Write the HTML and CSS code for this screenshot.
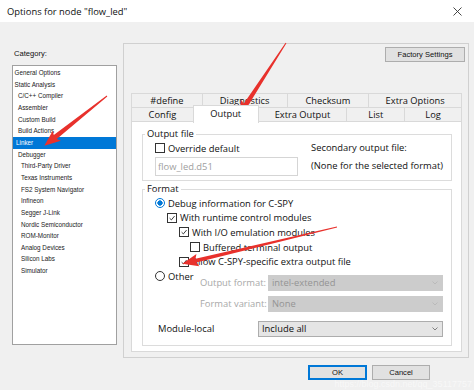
FILE: index.html
```html
<!DOCTYPE html>
<html lang="en">
<head>
    <meta charset="UTF-8">
    <meta name="viewport" content="width=device-width, initial-scale=1.0">
    <title>Options for node "flow_led"</title>
    <link rel="stylesheet" href="styles.css">
</head>
<body>
    <div class="titlebar">
        <span class="title">Options for node "flow_led"</span>
        <svg class="close" width="9" height="9" viewBox="0 0 9 9"><path d="M0.5 0.5L8.5 8.5M8.5 0.5L0.5 8.5" stroke="#333" stroke-width="0.9"/></svg>
    </div>

    <div class="dialog">
        <div class="category">
            <div class="category-label">Category:</div>
            <ul class="category-list">
                <li>General Options</li>
                <li>Static Analysis</li>
                <li class="sub">C/C++ Compiler</li>
                <li class="sub">Assembler</li>
                <li class="sub">Custom Build</li>
                <li class="sub">Build Actions</li>
                <li class="selected">Linker</li>
                <li class="sub">Debugger</li>
                <li class="sub2">Third-Party Driver</li>
                <li class="sub2">Texas Instruments</li>
                <li class="sub2">FS2 System Navigator</li>
                <li class="sub2">Infineon</li>
                <li class="sub2">Segger J-Link</li>
                <li class="sub2">Nordic Semiconductor</li>
                <li class="sub2">ROM-Monitor</li>
                <li class="sub2">Analog Devices</li>
                <li class="sub2">Silicon Labs</li>
                <li class="sub2">Simulator</li>
            </ul>
        </div>

        <div class="options">
            <div class="options-top">
                <button class="btn factory">Factory Settings</button>
            </div>

            <div class="tabs">
                <div class="tab-row back">
                    <div class="tab" style="width: 72px">#define</div>
                    <div class="tab" style="width: 86px">Diagnostics</div>
                    <div class="tab" style="width: 83px">Checksum</div>
                    <div class="tab" style="width: 94px">Extra Options</div>
                </div>
                <div class="tab-row front">
                    <div class="tab" style="width: 63px">Config</div>
                    <div class="tab active" style="width: 66px">Output</div>
                    <div class="tab" style="width: 90px">Extra Output</div>
                    <div class="tab" style="width: 59px">List</div>
                    <div class="tab" style="width: 58px">Log</div>
                </div>
            </div>

            <div class="tab-page">
                <fieldset class="group output-file">
                    <legend>Output file</legend>
                    <div class="of-cols">
                        <div class="of-left">
                            <label class="opt"><span class="cb"></span>Override default</label>
                            <div class="field">flow_led.d51</div>
                        </div>
                        <div class="of-right">
                            <div class="of-text">Secondary output file:</div>
                            <div class="of-text second">(None for the selected format)</div>
                        </div>
                    </div>
                </fieldset>

                <fieldset class="group format">
                    <legend>Format</legend>
                    <label class="opt first"><span class="radio on"></span>Debug information for C-SPY</label>
                    <label class="opt lvl1"><span class="cb"><svg viewBox="0 0 10 10"><path d="M2 5.2L4.2 7.4L8.2 2.6" fill="none" stroke="#222" stroke-width="1.1"/></svg></span>With runtime control modules</label>
                    <label class="opt lvl2"><span class="cb"><svg viewBox="0 0 10 10"><path d="M2 5.2L4.2 7.4L8.2 2.6" fill="none" stroke="#222" stroke-width="1.1"/></svg></span>With I/O emulation modules</label>
                    <label class="opt lvl3"><span class="cb"></span>Buffered terminal output</label>
                    <label class="opt lvl2"><span class="cb"><svg viewBox="0 0 10 10"><path d="M2 5.2L4.2 7.4L8.2 2.6" fill="none" stroke="#222" stroke-width="1.1"/></svg></span>Allow C-SPY-specific extra output file</label>

                    <div class="other">
                        <label class="opt other-opt"><span class="radio"></span>Other</label>
                        <div class="format-fields">
                            <span class="field-label">Output format:</span>
                            <div class="select disabled">intel-extended<svg width="6" height="4" viewBox="0 0 6 4"><path d="M0.5 0.5L3 3L5.5 0.5" fill="none" stroke="#b5b5b5" stroke-width="0.8"/></svg></div>
                            <span class="field-label">Format variant:</span>
                            <div class="select disabled">None<svg width="6" height="4" viewBox="0 0 6 4"><path d="M0.5 0.5L3 3L5.5 0.5" fill="none" stroke="#b5b5b5" stroke-width="0.8"/></svg></div>
                        </div>
                    </div>

                    <div class="module-local">
                        <span class="module-label">Module-local</span>
                        <div class="select">Include all<svg width="6" height="4" viewBox="0 0 6 4"><path d="M0.5 0.5L3 3L5.5 0.5" fill="none" stroke="#666" stroke-width="0.8"/></svg></div>
                    </div>
                </fieldset>
            </div>
        </div>
    </div>

    <div class="footer">
        <button class="btn ok">OK</button>
        <button class="btn">Cancel</button>
    </div>

    <div class="watermark">https://blog.csdn.net/qq_35117757</div>

    <!-- red arrows drawn over the dialog -->
    <svg class="arrows" width="474" height="390" viewBox="0 0 474 390">
        <g fill="#e8312c">
            <polygon transform="translate(107 96) rotate(141.6)" points="0,-0.5 66,-2.4 64,-6.5 80,0 64,6.5 66,2.4 0,0.5"/>
            <polygon transform="translate(286 43) rotate(123)" points="0,-0.5 74,-2.4 72,-6.5 88,0 72,6.5 74,2.4 0,0.5"/>
            <polygon transform="translate(337 227) rotate(166.6)" points="0,-0.4 145,-2 143,-6.3 159,0 143,6.3 145,2 0,0.4"/>
        </g>
    </svg>
</body>
</html>
```

FILE: styles.css
```css
* {
    margin: 0;
    padding: 0;
    box-sizing: border-box;
}

body {
    width: 474px;
    height: 390px;
    overflow: hidden;
    position: relative;
    background: #f0f0f0;
    font-family: "Open Sans", "Noto Sans", sans-serif;
    color: #111;
}

.titlebar {
    height: 22px;
    background: #fff;
    display: flex;
    align-items: center;
    justify-content: space-between;
    padding: 0 12px 0 7px;
    font-size: 9.4px;
}

.close {
    display: block;
}

.dialog {
    display: flex;
    gap: 6px;
    height: 336px;
    padding: 21px 5px 0 12px;
}

.category {
    flex: none;
    width: 105px;
    padding-top: 5px;
}

.category-label {
    font-family: "Liberation Sans", sans-serif;
    font-size: 7.6px;
    line-height: 11px;
    padding-left: 2px;
    margin-bottom: 6px;
}

.category-list {
    list-style: none;
    height: 280px;
    background: #fff;
    border: 1px solid #a0a0a0;
    padding-top: 1.2px;
    font-family: "Liberation Sans", sans-serif;
    font-size: 6.3px;
    color: #222;
}

.category-list li {
    height: 11.65px;
    line-height: 11.65px;
    padding-left: 1.5px;
    white-space: nowrap;
}

.category-list li.sub {
    padding-left: 5px;
}

.category-list li.sub2 {
    padding-left: 8px;
}

.category-list li.selected {
    background: #0078d7;
    color: #fff;
    padding-left: 3px;
}

.options {
    flex: 1;
    min-width: 0;
    border: 1px solid #d0d0d0;
    padding: 3px 3px 0 7px;
    display: flex;
    flex-direction: column;
}

.options-top {
    display: flex;
    justify-content: flex-end;
}

.btn {
    height: 15px;
    background: #e1e1e1;
    border: 1px solid #adadad;
    font-family: "Liberation Sans", sans-serif;
    font-size: 7.6px;
    color: #111;
}

.factory {
    width: 80px;
}

.tabs {
    margin-top: 31px;
    margin-right: 3px;
}

.tab-row {
    display: flex;
    height: 15px;
}

.tab-row.front {
    margin-top: -1px;
}

.tab {
    height: 15px;
    margin-left: -1px;
    border: 1px solid #d9d9d9;
    background: #f0f0f0;
    text-align: center;
    font-size: 9.3px;
    line-height: 13px;
    white-space: nowrap;
}

.tab:first-child {
    margin-left: 0;
}

.tab.active {
    position: relative;
    z-index: 1;
    height: 18px;
    margin-top: -2px;
    background: #fff;
    border-bottom: none;
    line-height: 15px;
}

.tab-page {
    height: 231px;
    margin-top: -1px;
    margin-right: 3px;
    background: #fff;
    border: 1px solid #d9d9d9;
    padding: 6px 9px 3px 10px;
    font-size: 9.4px;
}

.group {
    border: 1px solid #dcdcdc;
    padding: 0 8px 4px 12px;
    min-width: 0;
}

.group legend {
    margin-left: -10px;
    padding: 0 2px;
    line-height: 12px;
}

.opt {
    display: flex;
    align-items: center;
    gap: 3px;
    height: 14.6px;
    white-space: nowrap;
}

.cb {
    width: 10px;
    height: 10px;
    border: 1px solid #333;
    background: #fff;
    flex-shrink: 0;
}

.cb svg {
    display: block;
    width: 8px;
    height: 8px;
}

.radio {
    width: 10px;
    height: 10px;
    border: 1px solid #333;
    border-radius: 50%;
    background: #fff;
    flex-shrink: 0;
}

.radio.on {
    border-color: #0078d7;
    background: radial-gradient(circle, #0078d7 0 2.4px, #fff 2.9px);
}

.of-cols {
    display: flex;
}

.of-left {
    width: 148px;
    padding-top: 1px;
}

.of-left .opt {
    height: 14px;
}

.field {
    height: 19px;
    margin-top: 2px;
    border: 1px solid #d5d5d5;
    padding-left: 2px;
    line-height: 17px;
    color: #a0a0a0;
}

.of-right {
    margin-left: 13px;
    padding-top: 2px;
}

.of-text {
    line-height: 12px;
    white-space: nowrap;
}

.of-text.second {
    margin-top: 6px;
}

.format {
    margin-top: 2px;
    padding-bottom: 8px;
}

.opt.first {
    margin-top: 1px;
}

.opt.lvl1 {
    margin-left: 12px;
}

.opt.lvl2 {
    margin-left: 24px;
}

.opt.lvl3 {
    margin-left: 35px;
}

.other {
    display: flex;
}

.other-opt {
    width: 45px;
}

.format-fields {
    display: grid;
    grid-template-columns: 64px 175px;
    column-gap: 4px;
    row-gap: 5px;
    margin-top: 6px;
    align-items: center;
}

.field-label {
    text-align: right;
    color: #a8a8a8;
    white-space: nowrap;
}

.select {
    display: flex;
    align-items: center;
    justify-content: space-between;
    height: 16px;
    padding: 0 4px 0 3px;
    border: 1px solid #adadad;
    background: #e5e5e5;
    white-space: nowrap;
}

.select.disabled {
    border-color: #cccccc;
    background: #cccccc;
    color: #949494;
}

.module-local {
    display: flex;
    align-items: center;
    margin-top: 9px;
}

.module-label {
    width: 103px;
    padding-left: 3px;
}

.module-local .select {
    width: 185px;
}

.footer {
    display: flex;
    justify-content: flex-end;
    gap: 5px;
    padding: 7px 44px 0 0;
}

.footer .btn {
    width: 58px;
}

.footer .ok {
    width: 59px;
    border: 1px solid #0078d7;
    box-shadow: inset 0 0 0 1px #0078d7;
}

.watermark {
    position: absolute;
    right: 2px;
    bottom: 1px;
    font-family: "Liberation Sans", sans-serif;
    font-size: 9px;
    color: #fff;
    opacity: 0.55;
}

.arrows {
    position: absolute;
    top: 0;
    left: 0;
    pointer-events: none;
}
```
